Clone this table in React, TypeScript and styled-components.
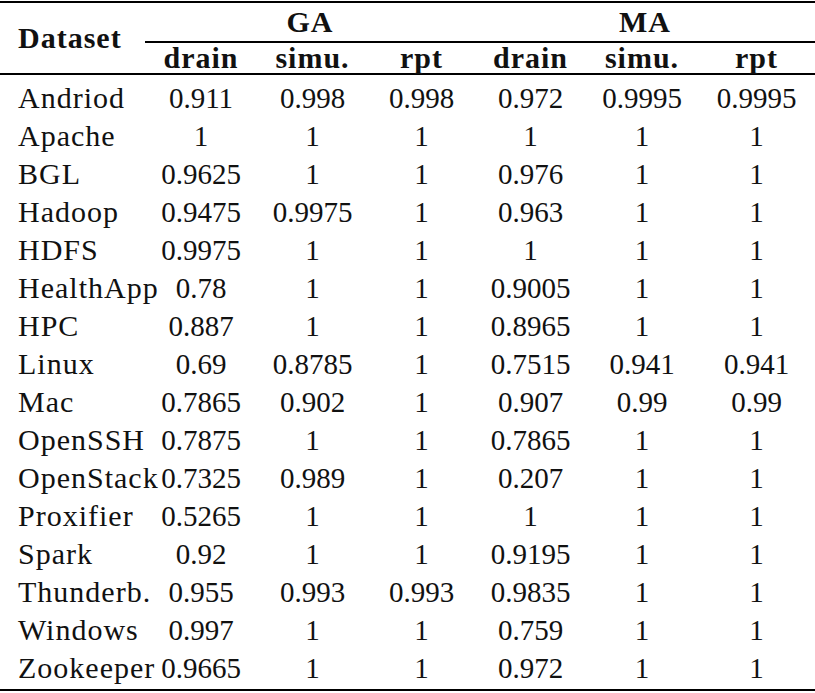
import React from 'react';
import styled, { createGlobalStyle } from 'styled-components';

const GlobalStyle = createGlobalStyle`
  html, body {
    margin: 0;
    padding: 0;
    background: #fff;
  }
  body {
    font-family: 'Liberation Serif', 'DejaVu Serif', serif;
    color: #111;
  }
`;

const Page = styled.div`
  width: 815px;
  padding-top: 1px;
`;

const Table = styled.table`
  width: 815px;
  border-collapse: collapse;
  table-layout: fixed;
  font-family: 'Liberation Serif', 'DejaVu Serif', serif;
  font-size: 30px;
  color: #111;
  border-top: 2px solid #000;
  border-bottom: 2px solid #000;
`;

const HeadCell = styled.th<{ $rule?: boolean; $h: number; $left?: boolean }>`
  font-family: 'Liberation Serif', 'DejaVu Serif', serif;
  font-weight: 700;
  letter-spacing: 1px;
  padding: 0;
  height: ${(p) => p.$h}px;
  text-align: ${(p) => (p.$left ? 'left' : 'center')};
  padding-left: ${(p) => (p.$left ? '18px' : '0')};
  border-bottom: ${(p) => (p.$rule ? '2px solid #000' : 'none')};
  vertical-align: middle;
  line-height: 1;
`;

const HeadRow = styled.tr<{ $rule?: boolean }>`
  border-bottom: ${(p) => (p.$rule ? '2px solid #000' : 'none')};
`;

const BodyRow = styled.tr<{ $first?: boolean; $last?: boolean }>`
  & > td {
    height: 38px;
    padding-top: ${(p) => (p.$first ? '4px' : '0')};
    padding-bottom: ${(p) => (p.$last ? '2px' : '0')};
  }
`;

const NameCell = styled.td`
  font-family: 'Liberation Serif', 'DejaVu Serif', serif;
  letter-spacing: 1px;
  padding-left: 18px !important;
  text-align: left;
  white-space: nowrap;
  line-height: 1;
  vertical-align: middle;
`;

const NumCell = styled.td`
  font-family: 'Liberation Serif', 'DejaVu Serif', serif;
  font-size: 29px;
  text-align: center;
  line-height: 1;
  vertical-align: middle;
  white-space: nowrap;
`;

const widths = [145, 112, 111, 107, 111, 112, 117];

const rows: [string, ...string[]][] = [
  ['Andriod', '0.911', '0.998', '0.998', '0.972', '0.9995', '0.9995'],
  ['Apache', '1', '1', '1', '1', '1', '1'],
  ['BGL', '0.9625', '1', '1', '0.976', '1', '1'],
  ['Hadoop', '0.9475', '0.9975', '1', '0.963', '1', '1'],
  ['HDFS', '0.9975', '1', '1', '1', '1', '1'],
  ['HealthApp', '0.78', '1', '1', '0.9005', '1', '1'],
  ['HPC', '0.887', '1', '1', '0.8965', '1', '1'],
  ['Linux', '0.69', '0.8785', '1', '0.7515', '0.941', '0.941'],
  ['Mac', '0.7865', '0.902', '1', '0.907', '0.99', '0.99'],
  ['OpenSSH', '0.7875', '1', '1', '0.7865', '1', '1'],
  ['OpenStack', '0.7325', '0.989', '1', '0.207', '1', '1'],
  ['Proxifier', '0.5265', '1', '1', '1', '1', '1'],
  ['Spark', '0.92', '1', '1', '0.9195', '1', '1'],
  ['Thunderb.', '0.955', '0.993', '0.993', '0.9835', '1', '1'],
  ['Windows', '0.997', '1', '1', '0.759', '1', '1'],
  ['Zookeeper', '0.9665', '1', '1', '0.972', '1', '1'],
];

const subHeads = ['drain', 'simu.', 'rpt', 'drain', 'simu.', 'rpt'];

const App: React.FC = () => (
  <Page>
    <GlobalStyle />
    <Table>
      <colgroup>
        {widths.map((w, i) => (
          <col key={i} style={{ width: w }} />
        ))}
      </colgroup>
      <thead>
        <HeadRow>
          <HeadCell $left $h={66} rowSpan={2}>Dataset</HeadCell>
          <HeadCell $h={38} $rule colSpan={3}>GA</HeadCell>
          <HeadCell $h={38} $rule colSpan={3}>MA</HeadCell>
        </HeadRow>
        <HeadRow $rule>
          {subHeads.map((s, i) => (
            <HeadCell key={i} $h={27}>{s}</HeadCell>
          ))}
        </HeadRow>
      </thead>
      <tbody>
        {rows.map(([name, ...vals], i) => (
          <BodyRow key={name} $first={i === 0} $last={i === rows.length - 1}>
            <NameCell>{name}</NameCell>
            {vals.map((v, j) => (
              <NumCell key={j}>{v}</NumCell>
            ))}
          </BodyRow>
        ))}
      </tbody>
    </Table>
  </Page>
);

export default App;
